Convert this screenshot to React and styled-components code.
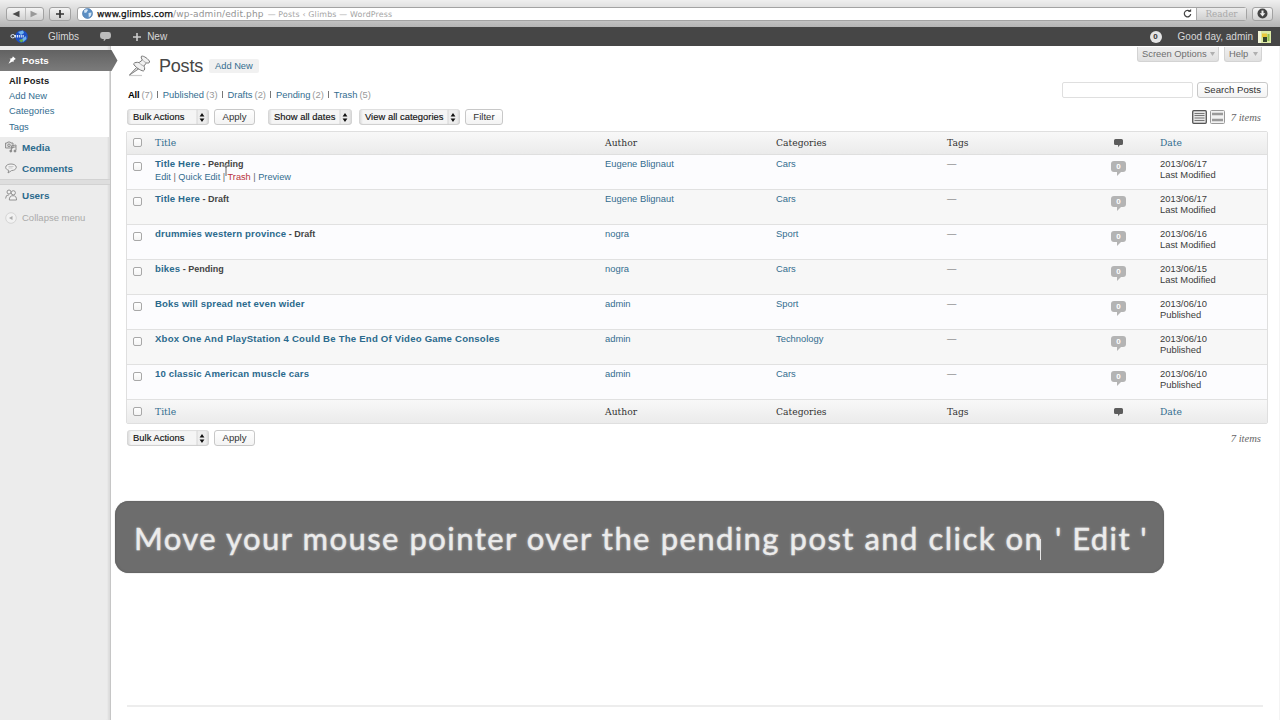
import styled, { createGlobalStyle } from "styled-components";

const GlobalStyle = createGlobalStyle`
  * {
    box-sizing: border-box;
  }
  body {
    margin: 0;
    width: 1280px;
    height: 720px;
    overflow: hidden;
    background: #fff;
    font-family: "Liberation Sans", Arial, sans-serif;
    font-size: 9.4px;
    line-height: 11px;
    color: #3c3c3c;
    white-space: nowrap;
  }
`;

const Screen = styled.div`
  position: relative;
  width: 1280px;
  height: 720px;
  display: flex;
  flex-direction: column;
  overflow: hidden;
`;

/* ---- browser toolbar ---- */

const BrowserBar = styled.div`
  height: 27px;
  flex: none;
  display: flex;
  align-items: center;
  padding: 0 6px;
  background: linear-gradient(#efefef, #d4d4d4 50%, #b4b4b4);
`;

const BrowserButton = styled.div`
  width: ${(props) => props.$width}px;
  height: 14px;
  margin-right: ${(props) => props.$gap || 0}px;
  display: flex;
  align-items: center;
  justify-content: space-evenly;
  border: 1px solid #a2a2a2;
  border-radius: 3px;
  background: linear-gradient(#f4f4f4, #d2d2d2);
`;

const ButtonSplit = styled.div`
  width: 1px;
  height: 12px;
  background: #bcbcbc;
`;

const AddressField = styled.div`
  width: 1170px;
  height: 14px;
  margin-right: 5px;
  display: flex;
  align-items: center;
  padding-left: 4px;
  border: 1px solid #a3a3a3;
  border-radius: 3px;
  background: #fff;
  font-family: "DejaVu Sans", "Open Sans", sans-serif;
  font-size: 9px;
  color: #939393;
  & > svg {
    flex: none;
  }
`;

const Host = styled.span`
  margin: 1px 0 0 4px;
  color: #111;
  -webkit-text-stroke: 0.25px #111;
`;

const Path = styled.span`
  margin-top: 1px;
  letter-spacing: 0.15px;
`;

const PageTitle = styled.span`
  flex: 1;
  margin: 1px 0 0 4px;
  font-size: 7.9px;
  letter-spacing: 0.15px;
  color: #a5a5a5;
`;

const Reader = styled.div`
  width: 50px;
  height: 12px;
  margin-left: 4px;
  border-left: 1px solid #aaa;
  background: linear-gradient(#ececec, #d0d0d0);
  text-align: center;
  font-family: "DejaVu Serif", serif;
  font-size: 8.8px;
  line-height: 12px;
  color: #aaa;
`;

/* ---- admin bar ---- */

const AdminBar = styled.div`
  height: 19px;
  flex: none;
  display: flex;
  align-items: center;
  padding: 0 9px 0 10px;
  background: #464646;
  color: #d8d8d8;
  font-size: 10px;
  & > svg {
    flex: none;
  }
`;

const BarText = styled.span`
  margin-left: ${(props) => props.$left}px;
  margin-right: ${(props) => props.$right || 0}px;
`;

const Updates = styled.div`
  width: 12px;
  height: 12px;
  margin-left: auto;
  border-radius: 6px;
  background: #e4e4e4;
  color: #333;
  font-size: 8px;
  font-weight: bold;
  line-height: 12px;
  text-align: center;
`;

/* ---- side menu ---- */

const Body = styled.div`
  flex: 1;
  display: flex;
`;

const SideMenu = styled.div`
  width: 111px;
  flex: none;
  padding-top: 4px;
  background: #ececec;
  border-right: 1px solid #c6c6c6;
  box-shadow: inset -3px 0 2px -1px #dcdcdc;
`;

const CurrentItem = styled.div`
  position: relative;
  width: 117px;
  height: 21px;
  display: flex;
  align-items: center;
  & > svg:first-child {
    position: absolute;
    left: 0;
    top: 0;
  }
`;

const CurrentLabel = styled.span`
  position: relative;
  display: flex;
  align-items: center;
  padding: 0 0 1px 8px;
  gap: 6px;
  color: #fff;
  font-size: 9.8px;
  font-weight: bold;
`;

const SubMenu = styled.div`
  height: 66px;
  margin-right: 1px;
  padding: 2px 0 0 9px;
  background: #fff;
  line-height: 15.2px;
`;

const SubItem = styled.div`
  color: ${(props) => (props.$current ? "#222" : "#336d8f")};
  font-weight: ${(props) => (props.$current ? "bold" : "normal")};
`;

const MenuItem = styled.div`
  height: ${(props) => props.$height || 21}px;
  display: flex;
  align-items: center;
  gap: 5px;
  padding: 0 0 1px 5px;
  color: #2b6a8d;
  font-size: 9.9px;
  font-weight: bold;
`;

const Separator = styled.div`
  height: 6px;
  border-top: 1px solid #d2d2d2;
  border-bottom: 1px solid #d2d2d2;
  background: #dedede;
`;

const Collapse = styled(MenuItem)`
  color: #aaa;
  font-size: 9.5px;
  font-weight: normal;
`;

/* ---- content ---- */

const Content = styled.div`
  position: relative;
  flex: 1;
  display: flex;
  flex-direction: column;
  padding: 0 11px 0 15px;
  border-right: 1px solid #f4f4f4;
`;

const Heading = styled.div`
  height: 35px;
  display: flex;
  align-items: center;
  padding: 5px 0 0 2px;
`;

const ScreenTabs = styled.div`
  align-self: flex-start;
  display: flex;
  gap: 5px;
  margin: -4px 6px 0 auto;
`;

const ScreenTab = styled.div`
  width: ${(props) => props.$width}px;
  height: 15px;
  display: flex;
  align-items: center;
  justify-content: space-between;
  padding: 0 3px 1px 4px;
  border: 1px solid #d3d3d3;
  border-top: 0;
  border-radius: 0 0 3px 3px;
  background: linear-gradient(#efefef, #e0e0e0);
  color: #6e6e6e;
`;

const PageName = styled.span`
  margin-left: 8px;
  font-size: 18px;
  line-height: 20px;
  letter-spacing: -0.2px;
  color: #464646;
`;

const AddNew = styled.span`
  margin-left: 6px;
  padding: 1px 6px;
  border-radius: 2px;
  background: #f1f1f1;
  color: #336d8f;
  font-size: 9.3px;
  line-height: 12px;
`;

const Views = styled.div`
  height: 28px;
  display: flex;
  align-items: center;
  padding: 0 0 1px 2px;
`;

const View = styled.span`
  color: ${(props) => (props.$current ? "#000" : "#336d8f")};
  font-weight: ${(props) => (props.$current ? "bold" : "normal")};
  letter-spacing: ${(props) => (props.$current ? -0.2 : 0)}px;
`;

const Count = styled.span`
  margin-left: 2px;
  color: #999;
`;

const Pipe = styled.span`
  width: 1px;
  height: 7px;
  margin: 0 4.6px 0 4.4px;
  background: #777;
`;

const Search = styled.div`
  display: flex;
  gap: 4px;
  margin: -10px 0 0 auto;
`;

const SearchInput = styled.div`
  width: 131px;
  height: 16px;
  border: 1px solid #dfdfdf;
  border-radius: 2px;
  background: #fff;
`;

const Button = styled.div`
  width: ${(props) => props.$width}px;
  height: 16px;
  border: 1px solid #c8c8c8;
  border-radius: 3px;
  background: linear-gradient(#fff, #f3f3f3);
  color: #333;
  font-size: 9.6px;
  line-height: 14px;
  text-align: center;
`;

const TableNav = styled.div`
  height: ${(props) => props.$height}px;
  display: flex;
  align-items: flex-start;
  padding-top: ${(props) => props.$top || 0}px;
`;

const SelectBox = styled.div`
  width: ${(props) => props.$width}px;
  height: 16px;
  margin-left: ${(props) => props.$left}px;
  margin-right: 5px;
  display: flex;
  align-items: center;
  justify-content: space-between;
  padding: 0 4px 0 6px;
  border-radius: 4px;
  background: linear-gradient(90deg, #d4d4d4, #f5f5f5 4px, #f5f5f5 calc(100% - 13px), #d6d6d6 calc(100% - 12px), #eee calc(100% - 11px), #ececec calc(100% - 3px), #cfcfcf);
  box-shadow: inset 0 -1px 1px #ccc, inset 0 1px 1px #ddd;
  color: #111;
`;

const SelectLabel = styled.span`
  padding-bottom: 2px;
  letter-spacing: 0.03px;
  -webkit-text-stroke: 0.15px #111;
`;

const NavRight = styled.div`
  display: flex;
  align-items: center;
  gap: 3px;
  height: 16px;
  margin-left: auto;
  padding-right: 7px;
`;

const ItemCount = styled.span`
  margin-left: 3px;
  font-family: "Liberation Serif", serif;
  font-size: 10.6px;
  font-style: italic;
  color: #666;
`;

const Table = styled.div`
  border: 1px solid #dfdfdf;
  border-radius: 2px;
`;

const Row = styled.div`
  height: 35px;
  display: grid;
  grid-template-columns: 28px 450px 171px 171px 164px 49px 1fr;
  padding-top: 3px;
  border-bottom: 1px solid #e1e1e1;
  background: ${(props) => (props.$alt ? "#f7f7f7" : "#fcfcfe")};
`;

const HeadRow = styled(Row)`
  height: 23px;
  padding: 0 0 ${(props) => (props.$foot ? 0 : 1)}px;
  align-items: center;
  background: linear-gradient(#f8f8f8, #ebebeb);
  border-bottom: ${(props) => (props.$foot ? "0" : "1px solid #dfdfdf")};
  font-family: "DejaVu Serif", "Liberation Serif", serif;
  font-size: 9.2px;
`;

const HeadCell = styled.span`
  color: ${(props) => (props.$link ? "#336d8f" : "#333")};
`;

const Checkbox = styled.span`
  width: 9px;
  height: 9px;
  margin: ${(props) => (props.$head ? 0 : 4)}px 0 0 6px;
  border: 1px solid #a8a8a8;
  border-radius: 2px;
  background: linear-gradient(#fff, #f3f3f3);
`;

const PostTitle = styled.span`
  color: #2b6a8d;
  font-weight: bold;
  font-size: 9.6px;
  letter-spacing: ${(props) => (props.$long ? 0.21 : 0.15)}px;
`;

const PostState = styled.span`
  color: #444;
  font-weight: bold;
  font-size: 9px;
`;

const RowActions = styled.div`
  margin-top: 2px;
  font-size: 9.2px;
  color: #666;
`;

const Link = styled.span`
  color: ${(props) => (props.$danger ? "#b8303a" : "#336d8f")};
`;

const Dash = styled.span`
  color: #666;
`;

const Bubble = styled.span`
  position: relative;
  width: 15px;
  height: 11px;
  margin-top: 3px;
  border-radius: 3px;
  background: #b4b4b4;
  color: #fff;
  font-size: 8px;
  font-weight: bold;
  text-align: center;
  &::after {
    content: "";
    position: absolute;
    left: 6px;
    top: 11px;
    border: 2px solid transparent;
    border-top-color: #b4b4b4;
    border-left-color: #b4b4b4;
  }
`;

const FooterLine = styled.div`
  height: 2px;
  margin: auto 5px 13px 1px;
  background: #ededed;
`;

const Pointer = styled.svg`
  position: absolute;
  left: 220px;
  top: 163px;
`;

const Caption = styled.div`
  position: absolute;
  left: 115px;
  top: 501px;
  width: 1049px;
  height: 72px;
  padding-left: 19px;
  border-radius: 14px;
  background: #6d6d6d;
  box-shadow: inset 0 0 2px #555, 0 0 1px #888;
  color: #ececec;
  font-family: Lato, "Open Sans", sans-serif;
  font-size: 31px;
  line-height: 74px;
  letter-spacing: 1.42px;
  word-spacing: 0.4px;
  text-shadow: 0 0 3px #b4b4b4;
  -webkit-text-stroke: 0.4px #ececec;
`;

const Quoted = styled.span`
  margin-left: 2px;
  word-spacing: 0;
`;

const Caret = styled.div`
  position: absolute;
  left: 925px;
  top: 38px;
  width: 1px;
  height: 21px;
  background: #e6e6e6;
`;

const posts = [
  { title: "Title Here", state: "Pending", author: "Eugene Blignaut", category: "Cars", date: "2013/06/17", status: "Last Modified", hover: true },
  { title: "Title Here", state: "Draft", author: "Eugene Blignaut", category: "Cars", date: "2013/06/17", status: "Last Modified" },
  { title: "drummies western province", state: "Draft", author: "nogra", category: "Sport", date: "2013/06/16", status: "Last Modified" },
  { title: "bikes", state: "Pending", author: "nogra", category: "Cars", date: "2013/06/15", status: "Last Modified" },
  { title: "Boks will spread net even wider", author: "admin", category: "Sport", date: "2013/06/10", status: "Published" },
  { title: "Xbox One And PlayStation 4 Could Be The End Of Video Game Consoles", author: "admin", category: "Technology", date: "2013/06/10", status: "Published" },
  { title: "10 classic American muscle cars", author: "admin", category: "Cars", date: "2013/06/10", status: "Published" },
];

const views = [
  { name: "All", count: 7 },
  { name: "Published", count: 3 },
  { name: "Drafts", count: 2 },
  { name: "Pending", count: 2 },
  { name: "Trash", count: 5 },
];

function CommentIcon({ color, width = 11 }) {
  return (
    <svg width={width} height={width * 0.9} viewBox="0 0 11 10">
      <path d="M2.500 0h6A2.500 2.500 0 0 1 11 2.500v2A2.500 2.500 0 0 1 8.500 7H6L3.600 9.800 3.800 7H2.500A2.500 2.500 0 0 1 0 4.500v-2A2.500 2.500 0 0 1 2.500 0z" fill={color} />
    </svg>
  );
}

function HeadComment() {
  return (
    <svg width="15" height="10" viewBox="0 0 15 10">
      <path d="M4.500 1h6a1.500 1.500 0 0 1 1.500 1.500v3A1.500 1.500 0 0 1 10.500 7H8.800L7.300 9.300 7 7H4.500A1.500 1.500 0 0 1 3 5.500v-3A1.500 1.500 0 0 1 4.500 1z" fill="#5c5c5c" />
    </svg>
  );
}

function Select({ label, width, left }) {
  return (
    <SelectBox $width={width} $left={left}>
      <SelectLabel>{label}</SelectLabel>
      <svg width="6" height="9" viewBox="0 0 6 9">
        <path d="M3 0l2.400 3.500H.6zM3 9L.6 5.500h4.800z" fill="#111" />
      </svg>
    </SelectBox>
  );
}

function TableHead({ foot }) {
  return (
    <HeadRow $foot={foot}>
      <Checkbox $head />
      <HeadCell $link>Title</HeadCell>
      <HeadCell>Author</HeadCell>
      <HeadCell>Categories</HeadCell>
      <HeadCell>Tags</HeadCell>
      <HeadComment />
      <HeadCell $link>Date</HeadCell>
    </HeadRow>
  );
}

function PostRow({ post, alt }) {
  return (
    <Row $alt={alt}>
      <Checkbox />
      <div>
        <PostTitle $long={post.title.length > 40}>{post.title}</PostTitle>
        {post.state && <PostState> - {post.state}</PostState>}
        {post.hover && (
          <RowActions>
            <Link>Edit</Link> | <Link>Quick Edit</Link> | <Link $danger>Trash</Link> | <Link>Preview</Link>
          </RowActions>
        )}
      </div>
      <Link>{post.author}</Link>
      <Link>{post.category}</Link>
      <Dash>—</Dash>
      <Bubble>0</Bubble>
      <div>
        {post.date}
        <br />
        {post.status}
      </div>
    </Row>
  );
}

function Browser() {
  return (
    <BrowserBar>
      <BrowserButton $width={38} $gap={5}>
        <svg width="8" height="8" viewBox="0 0 8 8"><path d="M7.500.8v6.400L.5 4z" fill="#4a4a4a" /></svg>
        <ButtonSplit />
        <svg width="8" height="8" viewBox="0 0 8 8"><path d="M.5.800v6.400L7.500 4z" fill="#999" /></svg>
      </BrowserButton>
      <BrowserButton $width={22} $gap={6}>
        <svg width="8" height="8" viewBox="0 0 8 8"><path d="M4 0v8M0 4h8" stroke="#333" strokeWidth="1.700" /></svg>
      </BrowserButton>
      <AddressField>
        <svg width="11" height="11" viewBox="0 0 11 11">
          <circle cx="5.500" cy="5.500" r="5" fill="#5c8fc4" stroke="#4270a3" strokeWidth=".6" />
          <path d="M2 2.500Q4.500.5 6 2L4.500 4.500 2.500 5zM6.500 5L9.500 4.500 9 7.500 6.800 9.500z" fill="#d5e6f5" />
        </svg>
        <Host>www.glimbs.com</Host>
        <Path>/wp-admin/edit.php</Path>
        <PageTitle>— Posts ‹ Glimbs — WordPress</PageTitle>
        <svg width="9" height="9" viewBox="0 0 9 9">
          <path d="M7 2.600A3.200 3.200 0 1 0 7.700 5" fill="none" stroke="#444" strokeWidth="1.200" />
          <path d="M4.800 2.800h3.300V0z" fill="#444" />
        </svg>
        <Reader>Reader</Reader>
      </AddressField>
      <BrowserButton $width={21}>
        <svg width="11" height="11" viewBox="0 0 11 11">
          <circle cx="5.500" cy="5.500" r="5" fill="#444" />
          <path d="M4.500 2.500h2v2.800h1.800L5.500 8.500 2.700 5.300h1.800z" fill="#eee" />
        </svg>
      </BrowserButton>
    </BrowserBar>
  );
}

function Admin() {
  return (
    <AdminBar>
      <svg width="19" height="15" viewBox="0 0 19 15">
        <circle cx="11.500" cy="7.500" r="6.300" fill="#1d4fc4" />
        <path d="M8 3l5-1.500 1 2.500-3 2zM12 10l4-3 .5 3-3.500 3z" fill="#6fb2ee" />
        <path d="M9 11l3-1 1.500 2-2.500 1.500z" fill="#69b04a" />
        <ellipse cx="2.800" cy="7.200" rx="1.900" ry="1.700" fill="none" stroke="#dbe7fa" />
        <path d="M5 7.200h9.500" stroke="#dbe7fa" strokeWidth="2.400" strokeDasharray="1.100 .8" />
      </svg>
      <BarText $left={19} $right={21}>Glimbs</BarText>
      <CommentIcon color="#bcbcbc" />
      <BarText $left={22} />
      <svg width="8" height="8" viewBox="0 0 8 8"><path d="M4 0v8M0 4h8" stroke="#ccc" strokeWidth="1.600" /></svg>
      <BarText $left={6}>New</BarText>
      <Updates>0</Updates>
      <BarText $left={16} $right={5}>Good day, admin</BarText>
      <svg width="13" height="12" viewBox="0 0 13 12">
        <rect width="13" height="12" fill="#dce9a5" />
        <path d="M0 0h3v12H0z" fill="#f2f5d8" />
        <path d="M4 2.500h5v4H4z" fill="#e9c83c" />
        <path d="M5 6h4v5H5z" fill="#34462a" />
        <path d="M9.500 3h2v7h-2z" fill="#91bf4c" />
      </svg>
    </AdminBar>
  );
}

function Menu() {
  return (
    <SideMenu>
      <CurrentItem>
        <svg width="118" height="21" viewBox="0 0 118 21">
          <defs>
            <linearGradient id="current" x2="0" y2="1">
              <stop offset="0" stopColor="#626262" />
              <stop offset="1" stopColor="#7b7b7b" />
            </linearGradient>
          </defs>
          <path d="M0 0h111.500l6 10.500-6 10.500H0z" fill="url(#current)" />
        </svg>
        <CurrentLabel>
          <svg width="8" height="8" viewBox="0 0 8 8"><path d="M4.800.3l3 2.800-1 .3-1.300 1.400v1.500L4.300 5.400.5 7.700 2.600 3.800 1.600 2.700l1.700-.2L4.700 1.200z" fill="#fff" /></svg>
          Posts
        </CurrentLabel>
      </CurrentItem>
      <SubMenu>
        <SubItem $current>All Posts</SubItem>
        <SubItem>Add New</SubItem>
        <SubItem>Categories</SubItem>
        <SubItem>Tags</SubItem>
      </SubMenu>
      <MenuItem>
        <svg width="12" height="12" viewBox="0 0 12 12" fill="none" stroke="#888" strokeWidth=".9">
          <path d="M.5 2h1.500l.8-1h2.400l.8 1h2v5h-7.500z" fill="#ddd" />
          <circle cx="4" cy="4.300" r="1.300" />
          <path d="M6.500 9.500V4.800l4.500-.8v5M7 6.500l4-.7" />
          <circle cx="5.800" cy="10" r="1" fill="#888" />
          <circle cx="10" cy="10" r="1" fill="#888" />
        </svg>
        Media
      </MenuItem>
      <MenuItem>
        <svg width="12" height="11" viewBox="0 0 12 11">
          <path d="M6 1C9 1 11.300 2.400 11.300 4.300S9 7.500 6.500 7.600L3 10l.8-2.700C2 6.900.7 5.800.7 4.300.7 2.400 3 1 6 1z" fill="#f2f2f2" stroke="#888" strokeWidth=".9" />
          <path d="M3.500 3.500h5M3.500 5h4" stroke="#bbb" strokeWidth=".7" />
        </svg>
        Comments
      </MenuItem>
      <Separator />
      <MenuItem>
        <svg width="12" height="12" viewBox="0 0 12 12" fill="#f2f2f2" stroke="#888" strokeWidth=".9">
          <circle cx="4" cy="3" r="2" />
          <path d="M.6 9.500Q.6 5.800 4 5.800" />
          <circle cx="8.300" cy="3.800" r="2.100" />
          <path d="M4.300 11q0-4.300 3.700-4.300t3.500 4.300z" />
        </svg>
        Users
      </MenuItem>
      <Collapse $height={24}>
        <svg width="12" height="12" viewBox="0 0 12 12">
          <circle cx="6" cy="6" r="5.300" fill="#f2f2f2" stroke="#d5d5d5" />
          <path d="M7.500 4v4L4 6z" fill="#aaa" />
        </svg>
        Collapse menu
      </Collapse>
    </SideMenu>
  );
}

function App() {
  return (
    <>
      <GlobalStyle />
      <Screen>
        <Browser />
        <Admin />
        <Body>
          <Menu />
          <Content>
            <Heading>
              <svg width="23" height="22" viewBox="0 0 23 22" strokeLinejoin="round">
                <path d="M1 20.500h13" stroke="#ccc" strokeWidth="1.200" />
                <path d="M8.500 12.500L1.500 20l9-6z" fill="#ddd" stroke="#777" strokeWidth=".9" />
                <path d="M13.500 1.200c2-.8 7.500 3 8.200 5.800-.6 1.300-2.200 1.200-3.200.8l-2.600 3.200c1.300 2 .9 4.300-.6 5-3-.5-8.800-4.400-9.700-7.200.9-1.500 3.800-1.800 5.400-1.200l3.400-2.600c-.8-1-1.600-2.800-.9-3.800z" fill="#f1f1f1" stroke="#777" />
                <path d="M11 7.600q1.400 2.300 4.900 3.400M14.500 5q1.400 2 4 2.800" fill="none" stroke="#999" strokeWidth=".8" />
              </svg>
              <PageName>Posts</PageName>
              <AddNew>Add New</AddNew>
              <ScreenTabs>
                <ScreenTab $width={82}>
                  Screen Options
                  <svg width="5" height="4" viewBox="0 0 5 4"><path d="M0 0h5L2.500 4z" fill="#b0b0b0" /></svg>
                </ScreenTab>
                <ScreenTab $width={38}>
                  Help
                  <svg width="5" height="4" viewBox="0 0 5 4"><path d="M0 0h5L2.500 4z" fill="#b0b0b0" /></svg>
                </ScreenTab>
              </ScreenTabs>
            </Heading>
            <Views>
              {views.map((view, idx) => (
                <span key={view.name} style={{ display: "contents" }}>
                  <View $current={idx === 0}>{view.name}</View>
                  <Count>({view.count})</Count>
                  {idx < views.length - 1 && <Pipe />}
                </span>
              ))}
              <Search>
                <SearchInput />
                <Button $width={71}>Search Posts</Button>
              </Search>
            </Views>
            <TableNav $height={22}>
              <Select label="Bulk Actions" width={82} left={1} />
              <Button $width={41}>Apply</Button>
              <Select label="Show all dates" width={84} left={13} />
              <Select label="View all categories" width={101} left={2} />
              <Button $width={38}>Filter</Button>
              <NavRight>
                <svg width="15" height="14" viewBox="0 0 15 14">
                  <rect x=".7" y=".7" width="13.600" height="12.600" rx="1" fill="#e6e6e6" stroke="#555" strokeWidth="1.300" />
                  <path d="M2.500 3.500h10M2.500 5.500h10M2.500 8h10M2.500 10.500h10" stroke="#777" />
                </svg>
                <svg width="15" height="14" viewBox="0 0 15 14">
                  <rect x=".5" y=".5" width="14" height="13" rx="1" fill="#f1f1f1" stroke="#999" />
                  <path d="M2 4h11M2 10h11" stroke="#999" strokeWidth="2.600" />
                </svg>
                <ItemCount>7 items</ItemCount>
              </NavRight>
            </TableNav>
            <Table>
              <TableHead />
              {posts.map((post, idx) => (
                <PostRow key={idx} post={post} alt={idx % 2 === 1} />
              ))}
              <TableHead foot />
            </Table>
            <TableNav $height={30} $top={6}>
              <Select label="Bulk Actions" width={82} left={1} />
              <Button $width={41}>Apply</Button>
              <NavRight>
                <ItemCount>7 items</ItemCount>
              </NavRight>
            </TableNav>
            <FooterLine />
          </Content>
        </Body>
        <Pointer width="11" height="16" viewBox="0 0 11 16">
          <path d="M2.500 2.500q3 0 3.500 2 .5-2 3.500-2M6 4v10" fill="none" stroke="#fff" strokeWidth="2" opacity=".6" />
          <path d="M2.500 2.500q3 0 3.500 2 .5-2 3.500-2M6 4v9" fill="none" stroke="#555" strokeWidth=".9" />
        </Pointer>
        <Caption>
          Move your mouse pointer over the pending post and click on <Quoted>' Edit '</Quoted>
          <Caret />
        </Caption>
      </Screen>
    </>
  );
}

export default App;
